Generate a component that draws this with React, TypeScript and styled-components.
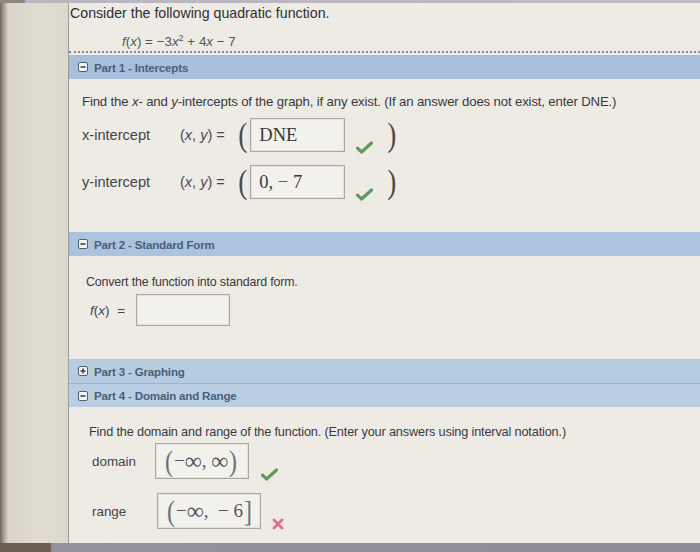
import React from "react";
import styled, { createGlobalStyle } from "styled-components";

const Global = createGlobalStyle`
  html, body { margin: 0; padding: 0; background: #eeebe5; }
  body { font-family: "Liberation Sans", Arial, sans-serif; }
`;

const Frame = styled.div`
  width: 700px;
  height: 552px;
  display: flex;
  flex-direction: column;
  overflow: hidden;
  background: #eeebe5;
`;

const TopStrip = styled.div`
  height: 3px;
  flex: none;
  background: linear-gradient(90deg, #8d877d 0px, #8d877d 24px, #b9b5c2 26px, #bcb8c4 100%);
`;

const Main = styled.div`
  flex: 1;
  display: flex;
  min-height: 0;
`;

const SideMargin = styled.div`
  width: 68px;
  flex: none;
  background: linear-gradient(90deg, #6f675e 0px, #9a9388 3px, #d9d5cb 8px, #e0dcd2 40px, #dcd8ce 68px);
  border-right: 1px solid #9d9a97;
`;

const Content = styled.div`
  flex: 1;
  display: flex;
  flex-direction: column;
  min-width: 0;
`;

const Title = styled.div`
  margin: 1px 0 0 1px;
  height: 18px;
  line-height: 18px;
  font-size: 14.2px;
  color: #2f2f33;
`;

const Formula = styled.div`
  margin: 8px 0 0 53px;
  height: 16px;
  line-height: 16px;
  font-size: 13.4px;
  color: #55535a;
  sup { font-size: 9px; vertical-align: 5px; }
  i { font-style: italic; }
`;

const DottedRule = styled.div`
  margin-top: 5px;
  height: 0;
  border-top: 2px dotted #8a8890;
`;

const PartHeader = styled.div<{ $tone: string; $top?: number; $divider?: boolean }>`
  margin-top: ${(p) => p.$top ?? 0}px;
  height: ${(p) => (p.$divider ? 23 : 24)}px;
  display: flex;
  align-items: center;
  gap: 6px;
  padding-left: 9px;
  background: ${(p) => p.$tone};
  border-top: ${(p) => (p.$divider ? "1px solid #9eb2c6" : "none")};
  font-size: 11.6px;
  font-weight: bold;
  color: #4a5f79;
  letter-spacing: -0.2px;
`;

const ToggleBox = styled.span`
  width: 8px;
  height: 8px;
  border: 1px solid #56606c;
  border-radius: 2px;
  background: #f3f3f3;
  display: inline-flex;
  align-items: center;
  justify-content: center;
  flex: none;
`;

const Section = styled.div<{ $pad: number; $indent: number }>`
  padding: ${(p) => p.$pad}px 0 0 ${(p) => p.$indent}px;
  display: flex;
  flex-direction: column;
`;

const Instruction = styled.div<{ $size: number }>`
  height: 16px;
  line-height: 16px;
  font-size: ${(p) => p.$size}px;
  color: #3a393d;
  white-space: nowrap;
  letter-spacing: -0.15px;
  i { font-style: italic; }
`;

const Row = styled.div<{ $top: number }>`
  margin-top: ${(p) => p.$top}px;
  display: flex;
  align-items: center;
`;

const Label = styled.div<{ $width: number; $size: number; $lead?: number }>`
  width: ${(p) => p.$width}px;
  padding-left: ${(p) => p.$lead ?? 0}px;
  flex: none;
  font-size: ${(p) => p.$size}px;
  color: #45444a;
  white-space: nowrap;
`;

const PointEq = styled.div`
  width: 57px;
  flex: none;
  font-size: 14.5px;
  color: #4b4a50;
  white-space: nowrap;
`;

const BigParen = styled.span`
  font-family: "Liberation Serif", "Times New Roman", serif;
  font-size: 34px;
  line-height: 34px;
  color: #4a494f;
  font-weight: 300;
  transform: scaleX(0.8);
  display: inline-block;
`;

const AnswerBox = styled.div<{ $w: number; $h: number }>`
  width: ${(p) => p.$w}px;
  height: ${(p) => p.$h}px;
  box-sizing: border-box;
  border: 1px solid #a9a7a3;
  box-shadow: inset 0 0 0 1px #e4e2dd;
  background: #f2f1ec;
  display: flex;
  align-items: center;
  padding-left: 8px;
  flex: none;
  font-family: "Liberation Serif", "Times New Roman", serif;
  font-size: 18.5px;
  color: #38373c;
`;

const Mark = styled.span<{ $dx: number; $dy: number }>`
  display: inline-flex;
  flex: none;
  margin-left: ${(p) => p.$dx}px;
  transform: translateY(${(p) => p.$dy}px);
`;

const Interval = styled.span`
  font-family: "Liberation Serif", "Times New Roman", serif;
  font-size: 19px;
  color: #55545a;
  display: flex;
  align-items: center;
  white-space: pre;
  b {
    font-weight: normal;
    font-size: 30px;
    line-height: 30px;
    color: #707076;
    transform: scaleX(0.8);
    display: inline-block;
  }
  em { font-style: normal; font-size: 24px; }
`;

const Check = () => (
  <svg width="17" height="13" viewBox="0 0 17 13">
    <path d="M1.5 7.2 L5.6 11 L15.5 2" fill="none" stroke="#5f9a5c" strokeWidth="3.2" strokeLinecap="round" strokeLinejoin="round" />
  </svg>
);

const Cross = () => (
  <svg width="12" height="12" viewBox="0 0 12 12">
    <path d="M2 2 L10 10 M10 2 L2 10" stroke="#e26e86" strokeWidth="2.8" strokeLinecap="round" />
  </svg>
);

const Minus = () => (
  <svg width="6" height="6" viewBox="0 0 6 6">
    <path d="M0.5 3 H5.5" stroke="#3d4652" strokeWidth="1.6" />
  </svg>
);

const Plus = () => (
  <svg width="6" height="6" viewBox="0 0 6 6">
    <path d="M0.5 3 H5.5 M3 0.5 V5.5" stroke="#3d4652" strokeWidth="1.6" />
  </svg>
);

const BottomStrip = styled.div`
  height: 9px;
  flex: none;
  background: linear-gradient(90deg, #6c5c52 0px, #6c5c52 50px, #94929a 52px, #8d8b93 100%);
`;

export default function App() {
  return (
    <>
      <Global />
      <Frame>
        <TopStrip />
        <Main>
          <SideMargin />
          <Content>
            <Title>Consider the following quadratic function.</Title>
            <Formula>
              <i>f</i>(<i>x</i>) = −3<i>x</i><sup>2</sup> + 4<i>x</i> − 7
            </Formula>
            <DottedRule />
            <PartHeader $tone="#a7bfdc" $top={2}>
              <ToggleBox><Minus /></ToggleBox>
              Part 1 - Intercepts
            </PartHeader>
            <Section $pad={15} $indent={13}>
              <Instruction $size={13.2}>
                Find the <i>x</i>- and <i>y</i>-intercepts of the graph, if any exist. (If an answer does not exist, enter DNE.)
              </Instruction>
              <Row $top={8}>
                <Label $width={98} $size={14.6}>x-intercept</Label>
                <PointEq>(<i>x</i>, <i>y</i>) =</PointEq>
                <BigParen>(</BigParen>
                <Mark $dx={2} $dy={0} />
                <AnswerBox $w={95} $h={34}>DNE</AnswerBox>
                <Mark $dx={11} $dy={12}><Check /></Mark>
                <Mark $dx={13} $dy={0}><BigParen>)</BigParen></Mark>
              </Row>
              <Row $top={13}>
                <Label $width={98} $size={14.6}>y-intercept</Label>
                <PointEq>(<i>x</i>, <i>y</i>) =</PointEq>
                <BigParen>(</BigParen>
                <Mark $dx={2} $dy={0} />
                <AnswerBox $w={95} $h={34}>0, − 7</AnswerBox>
                <Mark $dx={11} $dy={12}><Check /></Mark>
                <Mark $dx={13} $dy={0}><BigParen>)</BigParen></Mark>
              </Row>
            </Section>
            <PartHeader $tone="#abc3de" $top={33}>
              <ToggleBox><Minus /></ToggleBox>
              Part 2 - Standard Form
            </PartHeader>
            <Section $pad={18} $indent={17}>
              <Instruction $size={12.4}>Convert the function into standard form.</Instruction>
              <Row $top={4}>
                <Label $width={46} $size={13.6} $lead={4}>
                  <i>f</i>(<i>x</i>) &nbsp;=
                </Label>
                <AnswerBox $w={94} $h={32} />
              </Row>
            </Section>
            <PartHeader $tone="#b6cce1" $top={33}>
              <ToggleBox><Plus /></ToggleBox>
              Part 3 - Graphing
            </PartHeader>
            <PartHeader $tone="#b9cee2" $divider>
              <ToggleBox><Minus /></ToggleBox>
              Part 4 - Domain and Range
            </PartHeader>
            <Section $pad={17} $indent={20}>
              <Instruction $size={12.7}>
                Find the domain and range of the function. (Enter your answers using interval notation.)
              </Instruction>
              <Row $top={3}>
                <Label $width={63} $size={13.4} $lead={3}>domain</Label>
                <AnswerBox $w={94} $h={36}>
                  <Interval><b>(</b>−<em>∞</em>, <em>∞</em><b>)</b></Interval>
                </AnswerBox>
                <Mark $dx={12} $dy={13}><Check /></Mark>
              </Row>
              <Row $top={14}>
                <Label $width={65} $size={13.4} $lead={3}>range</Label>
                <AnswerBox $w={104} $h={36}>
                  <Interval><b>(</b>−<em>∞</em>,  − 6<b>]</b></Interval>
                </AnswerBox>
                <Mark $dx={11} $dy={13}><Cross /></Mark>
              </Row>
            </Section>
          </Content>
        </Main>
        <BottomStrip />
      </Frame>
    </>
  );
}
